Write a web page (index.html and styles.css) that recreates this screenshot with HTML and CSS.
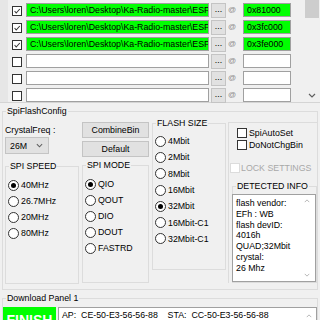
FILE: index.html
```html
<!DOCTYPE html>
<html lang="en">

<head>
  <meta charset="UTF-8">
  <meta name="viewport" content="width=device-width, initial-scale=1.0">
  <title>ESP Flash Download Tool</title>
  <link rel="stylesheet" href="styles.css">
</head>

<body>
  <!-- 固件列表 -->
  <div class="files">
    <div class="rows">
      <div class="row">
        <span class="chk on"><svg viewBox="0 0 10 10"><polyline points="2,5 4,7.5 8.5,2.5"/></svg></span>
        <span class="path fill">C:\Users\loren\Desktop\Ka-Radio-master\ESP8266\bin\user1.bin</span>
        <span class="dots">...</span>
        <span class="at">@</span>
        <span class="addr fill">0x81000</span>
      </div>
      <div class="row">
        <span class="chk on"><svg viewBox="0 0 10 10"><polyline points="2,5 4,7.5 8.5,2.5"/></svg></span>
        <span class="path fill">C:\Users\loren\Desktop\Ka-Radio-master\ESP8266\bin\blank.bin</span>
        <span class="dots">...</span>
        <span class="at">@</span>
        <span class="addr fill">0x3fc000</span>
      </div>
      <div class="row">
        <span class="chk on"><svg viewBox="0 0 10 10"><polyline points="2,5 4,7.5 8.5,2.5"/></svg></span>
        <span class="path fill">C:\Users\loren\Desktop\Ka-Radio-master\ESP8266\bin\init_data.bin</span>
        <span class="dots">...</span>
        <span class="at">@</span>
        <span class="addr fill">0x3fe000</span>
      </div>
      <div class="row">
        <span class="chk"></span>
        <span class="path"></span>
        <span class="dots">...</span>
        <span class="at">@</span>
        <span class="addr"></span>
      </div>
      <div class="row">
        <span class="chk"></span>
        <span class="path"></span>
        <span class="dots">...</span>
        <span class="at">@</span>
        <span class="addr"></span>
      </div>
      <div class="row">
        <span class="chk"></span>
        <span class="path"></span>
        <span class="dots">...</span>
        <span class="at">@</span>
        <span class="addr"></span>
      </div>
    </div>
    <div class="vscroll">
      <div class="thumb"></div>
      <svg class="down" viewBox="0 0 8 5"><polyline points="1,1 4,4 7,1"/></svg>
    </div>
  </div>

  <!-- SPI 配置 -->
  <fieldset class="group cfg">
    <legend>SpiFlashConfig</legend>
    <div class="cols">
      <div class="col col1">
        <div class="label">CrystalFreq :</div>
        <div class="combo">26M <svg viewBox="0 0 8 5"><polyline points="1,1 4,4 7,1"/></svg></div>
        <fieldset class="group speed">
          <legend>SPI SPEED</legend>
          <div class="radio on"><i></i>40MHz</div>
          <div class="radio"><i></i>26.7MHz</div>
          <div class="radio"><i></i>20MHz</div>
          <div class="radio"><i></i>80MHz</div>
        </fieldset>
      </div>
      <div class="col col2">
        <div class="btn first">CombineBin</div>
        <div class="btn">Default</div>
        <fieldset class="group mode">
          <legend>SPI MODE</legend>
          <div class="radio on"><i></i>QIO</div>
          <div class="radio"><i></i>QOUT</div>
          <div class="radio"><i></i>DIO</div>
          <div class="radio"><i></i>DOUT</div>
          <div class="radio"><i></i>FASTRD</div>
        </fieldset>
      </div>
      <div class="col col3">
        <fieldset class="group size">
          <legend>FLASH SIZE</legend>
          <div class="radio"><i></i>4Mbit</div>
          <div class="radio"><i></i>2Mbit</div>
          <div class="radio"><i></i>8Mbit</div>
          <div class="radio"><i></i>16Mbit</div>
          <div class="radio on"><i></i>32Mbit</div>
          <div class="radio"><i></i>16Mbit-C1</div>
          <div class="radio"><i></i>32Mbit-C1</div>
        </fieldset>
      </div>
      <div class="col col4">
        <div class="check"><span class="chk"></span>SpiAutoSet</div>
        <div class="check"><span class="chk"></span>DoNotChgBin</div>
        <div class="check lock"><span class="chk"></span>LOCK SETTINGS</div>
        <fieldset class="group info">
          <legend>DETECTED INFO</legend>
          <div class="memo">
            <div class="lines">flash vendor:<br>EFh : WB<br>flash devID:<br>4016h<br>QUAD;32Mbit<br>crystal:<br>26 Mhz</div>
            <div class="mscroll">
              <svg viewBox="0 0 8 5"><polyline points="1,4 4,1 7,4"/></svg>
              <svg viewBox="0 0 8 5"><polyline points="1,1 4,4 7,1"/></svg>
            </div>
          </div>
        </fieldset>
      </div>
    </div>
  </fieldset>

  <!-- 下载面板 -->
  <fieldset class="group dl">
    <legend>Download Panel 1</legend>
    <div class="dlrow">
      <div class="finish">FINISH</div>
      <div class="mac">
        <span>AP:&nbsp; CE-50-E3-56-56-88&nbsp;&nbsp;&nbsp; STA:&nbsp; CC-50-E3-56-56-88</span>
        <svg viewBox="0 0 8 5"><polyline points="1,4 4,1 7,4"/></svg>
      </div>
    </div>
  </fieldset>
</body>

</html>
```

FILE: styles.css
```css
* {
  box-sizing: border-box;
}

body {
  margin: 0;
  width: 320px;
  height: 320px;
  overflow: hidden;
  background-color: #f0f0f0;
  font-family: "Liberation Sans", Arial, sans-serif;
  font-size: 8.8px;
  color: #000;
}

svg polyline {
  fill: none;
  stroke: #606060;
  stroke-width: 1.2;
}

/* 固件列表 */
.files {
  display: flex;
  height: 103px;
  border-bottom: 1px solid #d4d4d4;
}

.rows {
  flex: 1;
  padding-top: 1px;
  border-left: 8px solid #e6e6e6;
}

.row {
  display: flex;
  align-items: flex-start;
  height: 17px;
}

.chk {
  display: inline-block;
  flex: none;
  width: 10px;
  height: 10px;
  border: 1px solid #333;
  background-color: #fff;
}

.chk svg {
  display: block;
  width: 8px;
  height: 8px;
}

.chk svg polyline {
  stroke: #333;
  stroke-width: 1.3;
}

.row .chk {
  margin: 5px 0 0 4px;
}

.path,
.addr {
  height: 14px;
  margin-top: 2px;
  border: 1px solid #a0a0a0;
  background-color: #fff;
  line-height: 12px;
  white-space: nowrap;
  overflow: hidden;
}

.path {
  width: 183px;
  margin-left: 4px;
  padding-left: 3px;
}

.addr {
  width: 48px;
  margin-left: 6px;
  padding-left: 3px;
}

.fill {
  background-color: #00ff00;
}

.dots {
  width: 15px;
  height: 15px;
  margin: 2px 0 0 2px;
  border: 1px solid #c4c4c4;
  background-color: #e1e1e1;
  text-align: center;
  line-height: 11px;
}

.at {
  width: 9px;
  margin: 3px 0 0 2px;
  overflow: hidden;
  color: #8c8c8c;
  font-size: 8px;
  line-height: 12px;
}

.vscroll {
  display: flex;
  flex-direction: column;
  justify-content: space-between;
  width: 16px;
  margin-left: 12px;
  background-color: #f0f0f0;
}

.vscroll .thumb {
  height: 18px;
  margin: 0 1px;
  background-color: #cdcdcd;
}

.vscroll .down {
  width: 8px;
  height: 5px;
  margin: 0 auto 4px;
}

/* 分组框 */
.group {
  margin: 0;
  padding: 0;
  min-width: 0;
  border: 1px solid #dcdcdc;
}

.group legend {
  margin-left: 3px;
  padding: 0 1px;
  line-height: 11px;
}

.cfg {
  margin: 3px 2px 0;
  height: 184px;
}

.cols {
  display: flex;
  height: 100%;
}

.col1 {
  width: 74px;
  margin-left: 2px;
  padding-top: 8px;
}

.label {
  line-height: 11px;
}

.combo {
  display: flex;
  justify-content: space-between;
  align-items: center;
  width: 44px;
  height: 17px;
  margin-top: 1px;
  padding: 0 5px 0 4px;
  border: 1px solid #c4c4c4;
  background-color: #e1e1e1;
}

.combo svg {
  width: 7px;
  height: 5px;
}

.speed,
.mode {
  height: 123px;
  margin-top: 7px;
  padding-top: 5px;
}

.col2 {
  width: 67px;
  margin-left: 3px;
  padding-top: 5px;
}

.btn {
  height: 16px;
  border: 1px solid #c4c4c4;
  background-color: #e1e1e1;
  text-align: center;
  line-height: 14px;
}

.btn + .btn {
  margin-top: 3px;
}

.mode {
  margin-top: 3px;
}

.col3 {
  width: 74px;
  margin-left: 3px;
  padding-top: 1px;
}

.size {
  height: 152px;
  padding-top: 4px;
}

.radio {
  display: flex;
  align-items: center;
  height: 16px;
  padding-left: 2px;
}

.size .radio {
  height: 16.3px;
}

.radio i {
  position: relative;
  width: 11px;
  height: 11px;
  margin-right: 2px;
  border: 1px solid #333;
  border-radius: 50%;
  background-color: #fff;
}

.radio.on i::after {
  content: "";
  position: absolute;
  top: 2px;
  left: 2px;
  width: 5px;
  height: 5px;
  border-radius: 50%;
  background-color: #000;
}

.col4 {
  flex: 1;
  margin: 5px 0 6px 2px;
  padding: 4px 0 0 8px;
  border-top: 1px solid #dcdcdc;
  border-left: 1px solid #dcdcdc;
}

.check {
  display: flex;
  align-items: center;
  height: 11.7px;
}

.check .chk {
  margin-right: 2px;
}

.lock {
  margin: 12px 0 0 -7px;
  color: #a8a8a8;
}

.lock .chk {
  margin-right: 1px;
  border-color: #dcdcdc;
}

.info {
  margin: 7px 0 0 -5px;
  height: 102px;
}

.memo {
  display: flex;
  height: 88px;
  margin: 2px 0 0 -1px;
  border: 1px solid #a0a0a0;
  background-color: #fff;
}

.lines {
  flex: 1;
  padding: 3px 0 0 3px;
  line-height: 10.8px;
}

.mscroll {
  display: flex;
  flex-direction: column;
  justify-content: space-between;
  width: 11px;
  padding: 4px 0;
}

.mscroll svg {
  width: 6px;
  height: 4px;
}

.mscroll polyline {
  stroke: #b0b0b0;
}

/* 下载面板 */
.dl {
  margin: 3px 2px 0;
  height: 40px;
  border-bottom: 0;
}

.dlrow {
  display: flex;
  margin-top: 3px;
}

.finish {
  width: 53px;
  height: 20px;
  background-color: #00ff00;
  color: #fff;
  font-size: 14px;
  font-weight: bold;
  text-align: center;
  line-height: 26px;
}

.mac {
  display: flex;
  justify-content: space-between;
  flex: 1;
  height: 20px;
  margin-left: 2px;
  padding: 2px 4px 0 3px;
  border: 1px solid #a0a0a0;
  background-color: #fff;
}

.mac svg {
  width: 6px;
  height: 4px;
  margin-top: 4px;
}

.mac polyline {
  stroke: #b0b0b0;
}
```
